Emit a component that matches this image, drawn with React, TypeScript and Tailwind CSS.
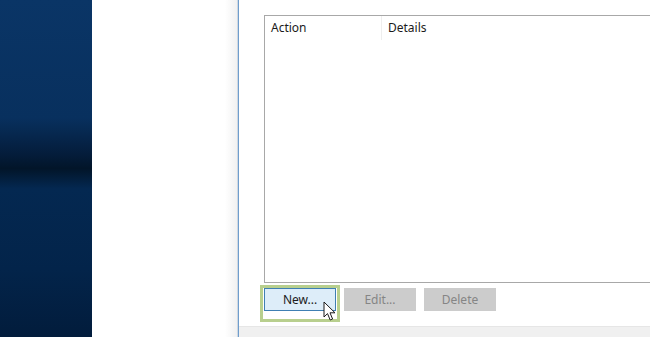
import { useState } from "react"

type Column = { key: string; label: string; width: number }

const columns: Column[] = [
  { key: "action", label: "Action", width: 117 },
  { key: "details", label: "Details", width: 300 },
]

export default function App() {
  const [rows] = useState<{ id: number; action: string; details: string }[]>([])

  return (
    <div className="relative flex h-[337px] w-[650px] overflow-hidden bg-white font-['Noto_Sans','Open_Sans',sans-serif]">
      {/* desktop */}
      <div className="h-full w-[92px] shrink-0 bg-[linear-gradient(to_bottom,#0a3566_0%,#08305e_35%,#041c3a_46%,#021529_50%,#042851_56%,#03244a_80%,#021c3c_100%)]" />
      {/* blank window behind */}
      <div className="h-full w-[133px] shrink-0 bg-white" />
      <div className="h-full w-[12px] shrink-0 bg-[linear-gradient(to_right,#ffffff,#f1f1f1)]" />
      <div className="h-full w-[1px] shrink-0 bg-[#cfd8e2]" />
      <div className="h-full w-[1px] shrink-0 bg-[#6f9dcc]" />

      {/* dialog */}
      <div className="flex h-full flex-1 flex-col bg-white">
        <div className="flex-1 pl-[25px] pt-[15px]">
          <div className="h-[268px] w-[420px] border border-[#a8a8a8] bg-white">
            <div className="flex h-[24px] items-center">
              {columns.map((c) => (
                <div
                  key={c.key}
                  className="flex h-full shrink-0 items-center border-r border-[#eeeeee] pl-[6px] text-[12px] text-[#1b1b1b]"
                  style={{ width: c.width }}
                >
                  {c.label}
                </div>
              ))}
            </div>
            {rows.map((r) => (
              <div key={r.id} className="flex text-[12px]">
                <div className="w-[117px] pl-[6px]">{r.action}</div>
                <div className="pl-[6px]">{r.details}</div>
              </div>
            ))}
          </div>
          <div className="mt-[5px] flex gap-[8px]">
            <button className="flex h-[23px] w-[72px] items-center justify-center border border-[#3f7fb3] bg-[#ddedf9] text-[12px] text-[#1b1b1b]">
              New...
            </button>
            <button className="flex h-[23px] w-[72px] items-center justify-center border border-[#cccccc] bg-[#cccccc] text-[12px] text-[#858585]">
              Edit...
            </button>
            <button className="flex h-[23px] w-[72px] items-center justify-center border border-[#cccccc] bg-[#cccccc] text-[12px] text-[#858585]">
              Delete
            </button>
          </div>
        </div>
        <div className="h-[11px] border-t border-[#e6e6e6] bg-[#f0f0f0]" />
      </div>

      {/* tutorial highlight */}
      <div className="pointer-events-none absolute left-[260px] top-[285px] h-[37px] w-[80px] border-[3px] border-[#b8cf8e]" />

      {/* cursor */}
      <svg className="absolute left-[323px] top-[301px]" width="14" height="21" viewBox="0 0 14 21">
        <path
          d="M1 1 L1 16 L4.5 12.6 L7.2 19 L9.6 18 L7 11.8 L12 11.8 Z"
          fill="#ffffff"
          stroke="#1a1a1a"
          strokeWidth="1"
          strokeLinejoin="round"
        />
      </svg>
    </div>
  )
}
